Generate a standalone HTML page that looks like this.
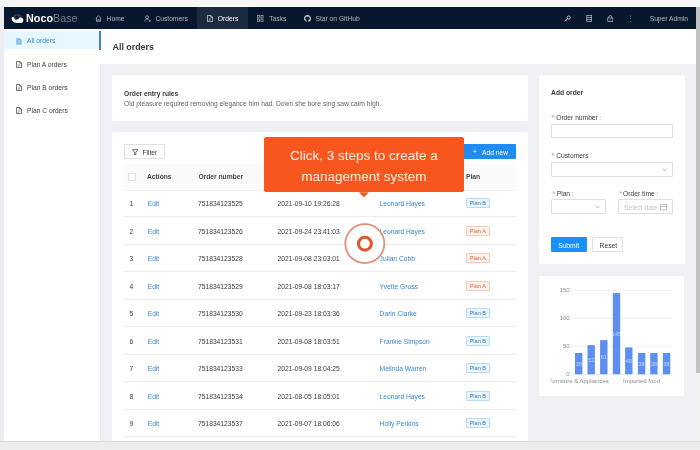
<!DOCTYPE html>
<html><head><meta charset="utf-8">
<style>
*{margin:0;padding:0;box-sizing:border-box}
html,body{width:700px;height:450px;overflow:hidden;background:#ededf1;font-family:"Liberation Sans",sans-serif;color:rgba(0,0,0,.8)}
.a{position:absolute;white-space:nowrap}
svg.a{z-index:2}
#hdr{left:4px;top:7px;width:692px;height:21.7px;background:#06172e}
#side{left:4px;top:28.7px;width:96.4px;height:412.3px;background:#fff}
#content{left:100.4px;top:28.7px;width:595.6px;height:412.3px;background:#eff0f4;border-left:1.2px solid #e8e9ed}
#phead{left:100.4px;top:28.7px;width:595.6px;height:35px;background:#fff}
.card{position:absolute;background:#fff;border-radius:1px}
.t{position:absolute;white-space:nowrap;font-size:6.7px;line-height:8px}
.nav{color:rgba(255,255,255,.65);font-size:6.7px}
.link{color:#3a86d2}
.tag{position:absolute;height:10px;width:23.6px;text-align:center;border-radius:1px;font-size:5.6px;line-height:9px;border:0.5px solid}
.tagb{background:#e9f6fe;border-color:#b5dcf5;color:#3c78b0}
.taga{background:#fdf1ea;border-color:#f5ccb8;color:#c9704f}
.rowline{position:absolute;left:123.7px;width:392px;height:0.6px;background:#ededed}
#root{position:absolute;left:0;top:0;width:700px;height:450px;overflow:hidden;will-change:transform}
</style></head><body><div id="root">
<div class="a" style="left:0;top:0;width:700px;height:6px;background:#f6f5f7"></div>
<div class="a" style="left:3px;top:6px;width:697px;height:1px;background:#fff"></div>
<div class="a" id="hdr"></div>
<div class="a" id="content"></div>
<div class="a" id="side"></div>
<div class="a" id="phead"></div>
<!-- scrollbar -->
<div class="a" style="left:696px;top:7px;width:4px;height:434px;background:#f1f1f1"></div>
<div class="a" style="left:696px;top:7px;width:4px;height:366px;background:#c1c1c1"></div>

<!-- header contents -->
<div class="t" style="left:26px;top:13px;font-size:10.8px;line-height:11px;font-weight:700;color:#fff">Noco</div>
<div class="t" style="left:53px;top:13px;font-size:10.8px;line-height:11px;color:rgba(255,255,255,.42)">Base</div>
<div class="a" style="left:197px;top:7px;width:51.2px;height:21.7px;background:rgba(255,255,255,.09)"></div>
<div class="t nav" style="left:106.6px;top:14.5px">Home</div>
<div class="t nav" style="left:155.4px;top:14.5px">Customers</div>
<div class="t nav" style="left:217.8px;top:14.5px;color:#fff">Orders</div>
<div class="t nav" style="left:269.2px;top:14.5px">Tasks</div>
<div class="t nav" style="left:315.5px;top:14.5px">Star on GitHub</div>
<div class="t nav" style="left:649.7px;top:14.5px">Super Admin</div>

<svg class="a" style="left:10px;top:12px" width="15" height="12" viewBox="0 0 15 12"><ellipse cx="7.3" cy="5.2" rx="4.2" ry="3.3" fill="rgba(255,255,255,.16)"/><path d="M1.6 5.2 C1.3 8.8 3.8 10.9 6.8 10.9 L10.8 10.9 C12.4 10.9 13.3 9.8 13.3 8.2 C13.3 6.6 12.1 5.6 10.7 5.6 C9.4 5.6 8.7 6.7 7.4 7.5 C5.8 8.3 4.2 7.4 4 5.2 Z" fill="#fff"/><circle cx="7" cy="5.4" r="1.7" fill="#06172e"/></svg>
<svg class="a" style="left:94.8px;top:15.2px" width="7" height="7" viewBox="0 0 14 14"><path d="M1.5 7 L7 1.8 L12.5 7 M3 5.8 V12.5 H11 V5.8" fill="none" stroke="rgba(255,255,255,.65)" stroke-width="1.5" stroke-linejoin="round"/><path d="M5.8 12.5 V9.2 H8.2 V12.5" fill="none" stroke="rgba(255,255,255,.65)" stroke-width="1.3"/></svg>
<svg class="a" style="left:143.8px;top:15px" width="7" height="7" viewBox="0 0 14 14"><circle cx="6" cy="4.5" r="3" fill="none" stroke="rgba(255,255,255,.65)" stroke-width="1.5"/><path d="M1.2 13 Q1.8 8.2 6 8.2 Q8.2 8.2 9.6 9.6 M9.5 11 H13 M9.5 13 H13" fill="none" stroke="rgba(255,255,255,.65)" stroke-width="1.4"/></svg>
<svg class="a" style="left:206.8px;top:14.6px" width="6.2" height="7.2" viewBox="0 0 12 14"><path d="M1 1 H7.5 L11 4.5 V13 H1 Z" fill="none" stroke="rgba(255,255,255,.85)" stroke-width="1.40" stroke-linejoin="round"/><path d="M7.5 1 V4.5 H11" fill="none" stroke="rgba(255,255,255,.85)" stroke-width="1.40"/><path d="M3.5 8 H8.5 M3.5 10.5 H6.5" stroke="rgba(255,255,255,.85)" stroke-width="1.12"/></svg>
<svg class="a" style="left:257.4px;top:15px" width="6.6" height="7" viewBox="0 0 13 14"><rect x="1" y="1" width="4.2" height="4.8" fill="none" stroke="rgba(255,255,255,.65)" stroke-width="1.4"/><rect x="7.8" y="1" width="4.2" height="4.8" fill="none" stroke="rgba(255,255,255,.65)" stroke-width="1.4"/><rect x="1" y="8.2" width="4.2" height="4.8" fill="none" stroke="rgba(255,255,255,.65)" stroke-width="1.4"/><rect x="7.8" y="8.2" width="4.2" height="4.8" fill="none" stroke="rgba(255,255,255,.65)" stroke-width="1.4"/></svg>
<svg class="a" style="left:303.6px;top:15px" width="7" height="7" viewBox="0 0 16 16"><path fill="rgba(255,255,255,.8)" d="M8 0C3.58 0 0 3.58 0 8c0 3.54 2.29 6.53 5.47 7.59.4.07.55-.17.55-.38 0-.19-.01-.82-.01-1.49-2.01.37-2.53-.49-2.69-.94-.09-.23-.48-.94-.82-1.13-.28-.15-.68-.52-.01-.53.63-.01 1.08.58 1.23.82.72 1.21 1.87.87 2.33.66.07-.52.28-.87.51-1.07-1.78-.2-3.64-.89-3.64-3.95 0-.87.31-1.59.82-2.15-.08-.2-.36-1.02.08-2.12 0 0 .67-.21 2.2.82.64-.18 1.32-.27 2-.27.68 0 1.36.09 2 .27 1.53-1.04 2.2-.82 2.2-.82.44 1.1.16 1.92.08 2.12.51.56.82 1.27.82 2.15 0 3.07-1.87 3.75-3.65 3.95.29.25.54.73.54 1.48 0 1.07-.01 1.93-.01 2.2 0 .21.15.46.55.38A8.013 8.013 0 0016 8c0-4.42-3.58-8-8-8z"/></svg>
<svg class="a" style="left:563.8px;top:15.3px" width="8" height="6.5" viewBox="0 0 16 13"><circle cx="9.5" cy="5" r="3.2" fill="none" stroke="rgba(255,255,255,.75)" stroke-width="1.8"/><path d="M7 7.5 L1.5 12 M3.5 10.5 L5 12" fill="none" stroke="rgba(255,255,255,.75)" stroke-width="1.8" stroke-linecap="round"/></svg>
<svg class="a" style="left:585.5px;top:14.7px" width="6.5" height="7" viewBox="0 0 13 14"><rect x="1.5" y="1" width="10" height="12" fill="none" stroke="rgba(255,255,255,.7)" stroke-width="1.5"/><path d="M1.5 5 H11.5 M1.5 9 H11.5" stroke="rgba(255,255,255,.7)" stroke-width="1.4"/></svg>
<svg class="a" style="left:606.6px;top:14.7px" width="6.5" height="7" viewBox="0 0 13 14"><path d="M3.5 6 V4.2 Q3.5 1 6.5 1 Q9.5 1 9.5 4.2 V6" fill="none" stroke="rgba(255,255,255,.7)" stroke-width="1.5"/><rect x="1.5" y="6" width="10" height="7" fill="none" stroke="rgba(255,255,255,.7)" stroke-width="1.5"/><path d="M6.5 8.5 V10.5" stroke="rgba(255,255,255,.7)" stroke-width="1.3"/></svg>
<svg class="a" style="left:629px;top:14.7px" width="3" height="7" viewBox="0 0 6 14"><circle cx="3" cy="2" r="1" fill="rgba(255,255,255,.5)"/><circle cx="3" cy="7" r="1" fill="rgba(255,255,255,.5)"/><circle cx="3" cy="12" r="1" fill="rgba(255,255,255,.5)"/></svg>
<svg class="a" style="left:16px;top:37.6px" width="6" height="7.2" viewBox="0 0 12 14"><path d="M0.5 0.5 H8 L11.5 4 V13.5 H0.5 Z" fill="#7dbcec"/><path d="M3.5 5.5 H8.5 M3.5 8.5 H8.5" stroke="#d5ebfb" stroke-width="1.2"/></svg>
<svg class="a" style="left:16.0px;top:60.8px" width="6.0" height="7.0" viewBox="0 0 12 14"><path d="M1 1 H7.5 L11 4.5 V13 H1 Z" fill="none" stroke="rgba(0,0,0,.7)" stroke-width="1.50" stroke-linejoin="round"/><path d="M7.5 1 V4.5 H11" fill="none" stroke="rgba(0,0,0,.7)" stroke-width="1.50"/><path d="M3.5 8 H8.5 M3.5 10.5 H6.5" stroke="rgba(0,0,0,.7)" stroke-width="1.20"/></svg>
<svg class="a" style="left:16.0px;top:83.8px" width="6.0" height="7.0" viewBox="0 0 12 14"><path d="M1 1 H7.5 L11 4.5 V13 H1 Z" fill="none" stroke="rgba(0,0,0,.7)" stroke-width="1.50" stroke-linejoin="round"/><path d="M7.5 1 V4.5 H11" fill="none" stroke="rgba(0,0,0,.7)" stroke-width="1.50"/><path d="M3.5 8 H8.5 M3.5 10.5 H6.5" stroke="rgba(0,0,0,.7)" stroke-width="1.20"/></svg>
<svg class="a" style="left:16.0px;top:106.8px" width="6.0" height="7.0" viewBox="0 0 12 14"><path d="M1 1 H7.5 L11 4.5 V13 H1 Z" fill="none" stroke="rgba(0,0,0,.7)" stroke-width="1.50" stroke-linejoin="round"/><path d="M7.5 1 V4.5 H11" fill="none" stroke="rgba(0,0,0,.7)" stroke-width="1.50"/><path d="M3.5 8 H8.5 M3.5 10.5 H6.5" stroke="rgba(0,0,0,.7)" stroke-width="1.20"/></svg>
<!-- sidebar -->
<div class="a" style="left:4px;top:30.9px;width:95px;height:18.6px;background:#e6f7ff"></div>
<div class="a" style="left:98.9px;top:30.9px;width:1.9px;height:19.2px;background:#4a82b0"></div>
<div class="t link" style="left:27px;top:37.4px">All orders</div>
<div class="t" style="left:27px;top:60.5px">Plan A orders</div>
<div class="t" style="left:27px;top:83.5px">Plan B orders</div>
<div class="t" style="left:27px;top:106.5px">Plan C orders</div>

<!-- page title -->
<div class="t" style="left:112.5px;top:42px;font-size:8.9px;line-height:10px;font-weight:700">All orders</div>

<!-- card 1 -->
<div class="card" style="left:112px;top:74.8px;width:416.4px;height:46px"></div>
<div class="t" style="left:124px;top:89.5px;font-weight:700;color:rgba(0,0,0,.8)">Order entry rules</div>
<div class="t" style="left:124px;top:100px;color:rgba(0,0,0,.65)">Old pleasure required removing elegance him had. Down she bore sing saw calm high.</div>

<!-- table card -->
<div class="card" style="left:112px;top:131.5px;width:416.4px;height:320px"></div>

<!-- table -->
<div class="a" style="left:123.7px;top:144.1px;width:41px;height:15.4px;border:0.5px solid #e0e0e0;border-radius:1px;background:#fff"></div>
<div class="t" style="left:142.4px;top:148.5px">Filter</div>
<div class="a" style="left:462px;top:144.2px;width:53.8px;height:15.3px;background:#1f8cf2;border-radius:1px"></div>
<div class="t" style="left:473px;top:148px;color:#fff;font-weight:300">+</div>
<div class="t" style="left:482px;top:148.5px;color:#fff">Add new</div>
<div class="a" style="left:123.7px;top:163.6px;width:392.1px;height:26.7px;background:#fafafa"></div>
<div class="a" style="left:123.7px;top:190.1px;width:392.1px;height:0.5px;background:#f0f0f0"></div>
<div class="a" style="left:127.6px;top:172.7px;width:8.2px;height:8.2px;border:0.5px solid #e0e0e0;border-radius:1px;background:#fff"></div>
<div class="t" style="left:147px;top:173px;font-weight:700;color:rgba(0,0,0,.75)">Actions</div>
<div class="t" style="left:198.4px;top:173px;font-weight:700;color:rgba(0,0,0,.75)">Order number</div>
<div class="t" style="left:277.6px;top:173px;font-weight:700;color:rgba(0,0,0,.75)">Created at</div>
<div class="t" style="left:379.6px;top:173px;font-weight:700;color:rgba(0,0,0,.75)">Customer</div>
<div class="t" style="left:466px;top:173px;font-weight:700;color:rgba(0,0,0,.75)">Plan</div>
<div class="t" style="left:129.5px;top:200.1px">1</div>
<div class="t link" style="left:147.7px;top:200.1px">Edit</div>
<div class="t" style="left:198px;top:200.1px">751834123525</div>
<div class="t" style="left:277.6px;top:200.1px">2021-09-10 19:26:28</div>
<div class="t link" style="left:379.6px;top:200.1px">Leonard Hayes</div>
<div class="tag tagb" style="left:466px;top:198.4px">Plan B</div>
<div class="rowline" style="top:216.3px"></div>
<div class="t" style="left:129.5px;top:227.6px">2</div>
<div class="t link" style="left:147.7px;top:227.6px">Edit</div>
<div class="t" style="left:198px;top:227.6px">751834123526</div>
<div class="t" style="left:277.6px;top:227.6px">2021-09-24 23:41:03</div>
<div class="t link" style="left:379.6px;top:227.6px">Leonard Hayes</div>
<div class="tag taga" style="left:466px;top:225.9px">Plan A</div>
<div class="rowline" style="top:243.8px"></div>
<div class="t" style="left:129.5px;top:255.1px">3</div>
<div class="t link" style="left:147.7px;top:255.1px">Edit</div>
<div class="t" style="left:198px;top:255.1px">751834123528</div>
<div class="t" style="left:277.6px;top:255.1px">2021-09-08 23:03:01</div>
<div class="t link" style="left:379.6px;top:255.1px">Julian Cobb</div>
<div class="tag taga" style="left:466px;top:253.4px">Plan A</div>
<div class="rowline" style="top:271.3px"></div>
<div class="t" style="left:129.5px;top:282.6px">4</div>
<div class="t link" style="left:147.7px;top:282.6px">Edit</div>
<div class="t" style="left:198px;top:282.6px">751834123529</div>
<div class="t" style="left:277.6px;top:282.6px">2021-09-08 18:03:17</div>
<div class="t link" style="left:379.6px;top:282.6px">Yvette Gross</div>
<div class="tag taga" style="left:466px;top:280.9px">Plan A</div>
<div class="rowline" style="top:298.8px"></div>
<div class="t" style="left:129.5px;top:310.1px">5</div>
<div class="t link" style="left:147.7px;top:310.1px">Edit</div>
<div class="t" style="left:198px;top:310.1px">751834123530</div>
<div class="t" style="left:277.6px;top:310.1px">2021-09-23 18:03:36</div>
<div class="t link" style="left:379.6px;top:310.1px">Darin Clarke</div>
<div class="tag tagb" style="left:466px;top:308.4px">Plan B</div>
<div class="rowline" style="top:326.3px"></div>
<div class="t" style="left:129.5px;top:337.6px">6</div>
<div class="t link" style="left:147.7px;top:337.6px">Edit</div>
<div class="t" style="left:198px;top:337.6px">751834123531</div>
<div class="t" style="left:277.6px;top:337.6px">2021-09-08 18:03:51</div>
<div class="t link" style="left:379.6px;top:337.6px">Frankie Simpson</div>
<div class="tag tagb" style="left:466px;top:335.9px">Plan B</div>
<div class="rowline" style="top:353.8px"></div>
<div class="t" style="left:129.5px;top:365.1px">7</div>
<div class="t link" style="left:147.7px;top:365.1px">Edit</div>
<div class="t" style="left:198px;top:365.1px">751834123533</div>
<div class="t" style="left:277.6px;top:365.1px">2021-09-09 18:04:25</div>
<div class="t link" style="left:379.6px;top:365.1px">Melinda Warren</div>
<div class="tag tagb" style="left:466px;top:363.4px">Plan B</div>
<div class="rowline" style="top:381.3px"></div>
<div class="t" style="left:129.5px;top:392.6px">8</div>
<div class="t link" style="left:147.7px;top:392.6px">Edit</div>
<div class="t" style="left:198px;top:392.6px">751834123534</div>
<div class="t" style="left:277.6px;top:392.6px">2021-08-05 18:05:01</div>
<div class="t link" style="left:379.6px;top:392.6px">Leonard Hayes</div>
<div class="tag tagb" style="left:466px;top:390.9px">Plan B</div>
<div class="rowline" style="top:408.8px"></div>
<div class="t" style="left:129.5px;top:420.1px">9</div>
<div class="t link" style="left:147.7px;top:420.1px">Edit</div>
<div class="t" style="left:198px;top:420.1px">751834123537</div>
<div class="t" style="left:277.6px;top:420.1px">2021-09-07 18:06:06</div>
<div class="t link" style="left:379.6px;top:420.1px">Holly Perkins</div>
<div class="tag tagb" style="left:466px;top:418.4px">Plan B</div>
<div class="rowline" style="top:436.3px"></div>
<!-- right form card -->
<div class="card" style="left:538.8px;top:75px;width:145.9px;height:189.3px"></div>

<!-- form -->
<div class="t" style="left:551.1px;top:89px;font-weight:700">Add order</div>
<div class="t" style="left:551.6px;top:114.3px;color:#f0787a">*</div>
<div class="t" style="left:556.2px;top:114px">Order number<span style="color:rgba(0,0,0,.45);margin-left:1.5px">:</span></div>
<div class="a" style="left:551.1px;top:123.8px;width:121.6px;height:14.6px;border:0.5px solid #e0e0e0;border-radius:1px"></div>
<div class="t" style="left:551.6px;top:152px;color:#f0787a">*</div>
<div class="t" style="left:556.2px;top:151.8px">Customers<span style="color:rgba(0,0,0,.45);margin-left:1.5px">:</span></div>
<div class="a" style="left:551.1px;top:161.6px;width:121.6px;height:15.1px;border:0.5px solid #e0e0e0;border-radius:1px"></div>
<div class="t" style="left:552.4px;top:190.3px;color:#f0787a">*</div>
<div class="t" style="left:556.7px;top:190px">Plan<span style="color:rgba(0,0,0,.45);margin-left:1.5px">:</span></div>
<div class="t" style="left:619.3px;top:190.3px;color:#f0787a">*</div>
<div class="t" style="left:623.1px;top:190px">Order time<span style="color:rgba(0,0,0,.45);margin-left:1.5px">:</span></div>
<div class="a" style="left:551.1px;top:199.3px;width:54.7px;height:15px;border:0.5px solid #e0e0e0;border-radius:1px"></div>
<div class="a" style="left:617.6px;top:199.3px;width:55.2px;height:15px;border:0.5px solid #e0e0e0;border-radius:1px"></div>
<div class="t" style="left:624px;top:203.5px;color:#c4c4c4">Select date</div>
<div class="a" style="left:551.1px;top:237.4px;width:36px;height:15px;background:#1890ff;border-radius:1px"></div>
<div class="t" style="left:558.2px;top:241.5px;color:#fff">Submit</div>
<div class="a" style="left:591.9px;top:237.4px;width:31px;height:15px;border:0.5px solid #e0e0e0;border-radius:1px;background:#fff"></div>
<div class="t" style="left:599.6px;top:241.5px">Reset</div>
<svg class="a" style="left:131.6px;top:148.6px" width="6.4" height="6.5" viewBox="0 0 13 13"><path d="M1 1.2 H12 L7.8 6.5 V11.8 H5.2 V6.5 Z" fill="none" stroke="rgba(0,0,0,.75)" stroke-width="1.5" stroke-linejoin="round"/></svg>
<svg class="a" style="left:662.2px;top:167.8px" width="5.4" height="3.6" viewBox="0 0 11 7"><path d="M1 1 L5.5 5.6 L10 1" fill="none" stroke="rgba(0,0,0,.35)" stroke-width="1.6"/></svg>
<svg class="a" style="left:595.4px;top:205.2px" width="5.2" height="3.8" viewBox="0 0 11 7"><path d="M1 1 L5.5 5.6 L10 1" fill="none" stroke="rgba(0,0,0,.35)" stroke-width="1.6"/></svg>
<svg class="a" style="left:660.3px;top:204.4px" width="7.2" height="6.2" viewBox="0 0 14 12"><rect x="1" y="1.5" width="12" height="9.8" fill="none" stroke="rgba(0,0,0,.3)" stroke-width="1.5"/><path d="M1 4.8 H13" stroke="rgba(0,0,0,.3)" stroke-width="1.5"/></svg>
<!-- chart card -->
<div class="card" style="left:538.8px;top:276px;width:145.4px;height:120px"></div>
<svg class="a" style="left:539.2px;top:276px;font-family:'Liberation Sans'" width="145" height="120"><defs><clipPath id="cc"><rect x="11.8" y="0" width="133" height="120"/></clipPath></defs><g clip-path="url(#cc)"><line x1="35.3" y1="14.30" x2="133.1" y2="14.30" stroke="#e2e2e2" stroke-width="0.6"/><text x="30.6" y="16.40" text-anchor="end" font-size="6" fill="#8c8c8c">150</text><line x1="35.3" y1="42.20" x2="133.1" y2="42.20" stroke="#e2e2e2" stroke-width="0.6"/><text x="30.6" y="44.30" text-anchor="end" font-size="6" fill="#8c8c8c">100</text><line x1="35.3" y1="70.20" x2="133.1" y2="70.20" stroke="#e2e2e2" stroke-width="0.6"/><text x="30.6" y="72.30" text-anchor="end" font-size="6" fill="#8c8c8c">50</text><line x1="35.3" y1="98.30" x2="133.1" y2="98.30" stroke="#e2e2e2" stroke-width="0.6"/><text x="30.6" y="100.40" text-anchor="end" font-size="6" fill="#8c8c8c">0</text><rect x="36.00" y="77.02" width="7.4" height="21.28" fill="#5d8ff2"/><text x="39.70" y="89.66" text-anchor="middle" font-size="5.5" fill="rgba(255,255,255,.6)">38</text><rect x="48.50" y="69.18" width="7.4" height="29.12" fill="#5d8ff2"/><text x="52.20" y="85.74" text-anchor="middle" font-size="5.5" fill="rgba(255,255,255,.6)">52</text><rect x="61.10" y="64.14" width="7.4" height="34.16" fill="#5d8ff2"/><text x="64.80" y="83.22" text-anchor="middle" font-size="5.5" fill="rgba(255,255,255,.6)">61</text><rect x="73.80" y="17.10" width="7.4" height="81.20" fill="#5d8ff2"/><text x="77.50" y="59.70" text-anchor="middle" font-size="5.5" fill="rgba(255,255,255,.6)">145</text><rect x="86.10" y="71.42" width="7.4" height="26.88" fill="#5d8ff2"/><text x="89.80" y="86.86" text-anchor="middle" font-size="5.5" fill="rgba(255,255,255,.6)">48</text><rect x="98.90" y="77.02" width="7.4" height="21.28" fill="#5d8ff2"/><text x="102.60" y="89.66" text-anchor="middle" font-size="5.5" fill="rgba(255,255,255,.6)">38</text><rect x="111.20" y="77.02" width="7.4" height="21.28" fill="#5d8ff2"/><text x="114.90" y="89.66" text-anchor="middle" font-size="5.5" fill="rgba(255,255,255,.6)">38</text><rect x="123.90" y="77.02" width="7.4" height="21.28" fill="#5d8ff2"/><text x="127.60" y="89.66" text-anchor="middle" font-size="5.5" fill="rgba(255,255,255,.6)">38</text><text x="39.70" y="107.40" text-anchor="middle" font-size="6" fill="#8c8c8c">Furniture &amp; Appliances</text><text x="102.50" y="107.40" text-anchor="middle" font-size="6" fill="#8c8c8c">Imported food</text></g></svg>


<!-- tooltip -->
<div class="a" style="left:263.8px;top:136.9px;width:200.2px;height:55.3px;background:#f7561f;border-radius:2px"></div>
<svg class="a" style="left:358px;top:192px" width="12" height="6"><path d="M0.9 0.2 L5.9 5.2 L10.9 0.2Z" fill="#f7561f"/></svg>
<div class="a" style="left:263.8px;top:144.5px;width:200.2px;text-align:center;font-size:13.5px;line-height:21.4px;color:#fff3ea">Click, 3 steps to create a<br>management system</div>
<!-- marker -->
<svg class="a" style="left:340px;top:219px" width="50" height="50">
<circle cx="24.8" cy="24.6" r="19.5" fill="rgba(255,255,255,.75)" stroke="#e3917a" stroke-width="1.8"/>
<circle cx="24.9" cy="24.7" r="6.4" fill="rgba(255,255,255,.9)" stroke="#e0582c" stroke-width="3.1"/>
</svg>
<!-- bottom strip -->
<div class="a" style="left:0;top:440.7px;width:700px;height:9.3px;background:#ededef;border-top:1px solid #dcdcdc;z-index:5"></div>
</div></body></html>
